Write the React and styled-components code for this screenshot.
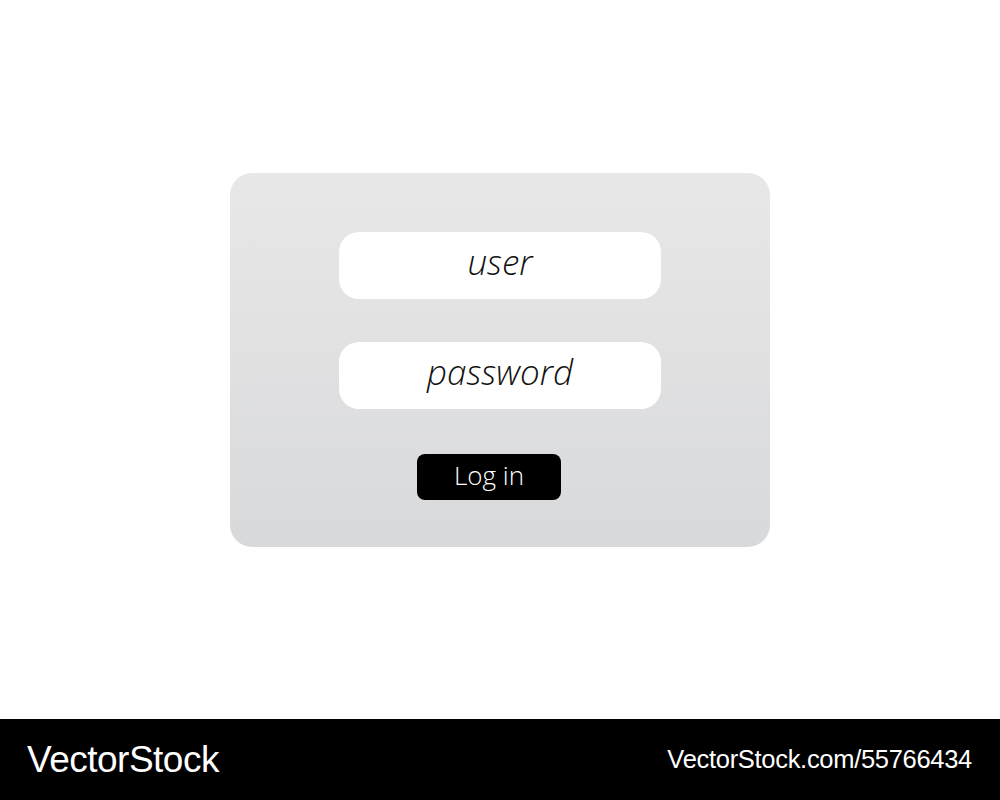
import React from 'react';
import styled, { createGlobalStyle } from 'styled-components';

const Global = createGlobalStyle`
    html, body {
        margin: 0;
        padding: 0;
        background: #ffffff;
    }
`;

export default function App() {
    return (
        <Page>
            <Global />
            <Stage>
                <Card>
                    <Field>user</Field>
                    <Field>password</Field>
                    <LoginButton>Log in</LoginButton>
                </Card>
            </Stage>
            <Footer>
                <Brand>VectorStock</Brand>
                <Ref>VectorStock.com/55766434</Ref>
            </Footer>
        </Page>
    );
}

const Page = styled.div`
    display: flex;
    flex-direction: column;
    width: 1000px;
    height: 800px;
    overflow: hidden;
`;

const Stage = styled.div`
    flex: 1;
    display: flex;
    justify-content: center;
    align-items: center;
`;

const Card = styled.div`
    box-sizing: border-box;
    width: 540px;
    height: 374px;
    padding-top: 59px;
    border-radius: 22px;
    background: linear-gradient(#e8e8e8, #d8d9db);
    display: flex;
    flex-direction: column;
    align-items: center;
`;

const Field = styled.div`
    box-sizing: border-box;
    width: 322px;
    height: 67px;
    margin-bottom: 43px;
    padding-bottom: 7px;
    border-radius: 20px;
    background: #ffffff;
    display: flex;
    justify-content: center;
    align-items: center;
    font-family: 'Open Sans', 'Lato', sans-serif;
    font-style: italic;
    font-weight: 300;
    font-size: 35px;
    color: #111;

    &:nth-of-type(2) {
        margin-bottom: 45px;
    }
`;

const LoginButton = styled.div`
    box-sizing: border-box;
    width: 144px;
    height: 46px;
    margin-right: 22px;
    padding-bottom: 4px;
    border-radius: 8px;
    background: #000;
    color: #fff;
    display: flex;
    justify-content: center;
    align-items: center;
    font-family: 'Open Sans', 'Lato', sans-serif;
    font-weight: 300;
    font-size: 26px;
`;

const Footer = styled.div`
    height: 81px;
    background: #000;
    color: #fff;
    display: flex;
    align-items: center;
    justify-content: space-between;
    padding: 0 28px 0 27px;
    font-family: 'Liberation Sans Narrow', 'Liberation Sans', Arial, sans-serif;
`;

const Brand = styled.div`
    font-size: 37px;
    letter-spacing: -0.5px;
`;

const Ref = styled.div`
    font-size: 25.5px;
    letter-spacing: -0.3px;
`;
